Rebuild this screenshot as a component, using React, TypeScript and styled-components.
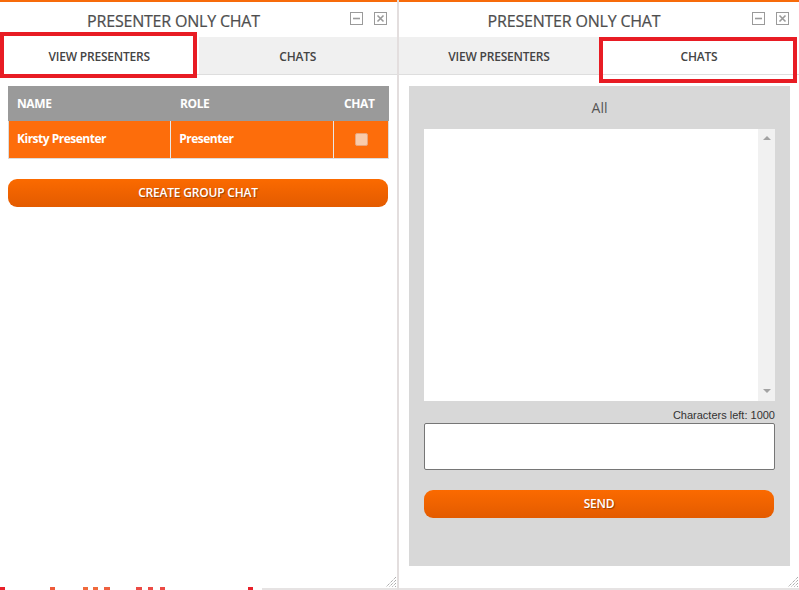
import styled, { createGlobalStyle } from "styled-components"

const GlobalStyle = createGlobalStyle`
  html, body {
    margin: 0;
    padding: 0;
    background: #ffffff;
    overflow: hidden;
  }
  * {
    box-sizing: border-box;
  }
`

const presenters = [{ name: "Kirsty Presenter", role: "Presenter" }]

// bits of a cut-off annotation peeking in at the bottom of the left window
const cutMarks = [
  { x: 0, w: 5, c: "#e8202a" },
  { x: 50, w: 5, c: "#ee5a3a" },
  { x: 83, w: 5, c: "#f06a3c" },
  { x: 93, w: 5, c: "#f06a3c" },
  { x: 104, w: 6, c: "#ef6040" },
  { x: 136, w: 6, c: "#ec4a44" },
  { x: 148, w: 5, c: "#ec4a44" },
  { x: 160, w: 5, c: "#ec4a44" },
  { x: 248, w: 5, c: "#e8202a" },
]

const MinIcon = () => (
  <svg width="13" height="13" viewBox="0 0 13 13">
    <rect x="0.5" y="0.5" width="12" height="12" fill="none" stroke="#9a9a9a" />
    <line x1="3" y1="6.5" x2="10" y2="6.5" stroke="#9a9a9a" strokeWidth="1.6" />
  </svg>
)

const CloseIcon = () => (
  <svg width="13" height="13" viewBox="0 0 13 13">
    <rect x="0.5" y="0.5" width="12" height="12" fill="none" stroke="#9a9a9a" />
    <path d="M3.5 3.5 L9.5 9.5 M9.5 3.5 L3.5 9.5" stroke="#9a9a9a" strokeWidth="1.6" />
  </svg>
)

const Grip = () => (
  <svg width="12" height="12" viewBox="0 0 12 12">
    <path d="M11 1 L1 11 M11 4 L4 11 M11 7 L7 11 M11 10 L10 11" stroke="#8a8a8a" strokeWidth="1" strokeDasharray="1 1" />
  </svg>
)

const Header = () => (
  <TitleBar>
    <Title>PRESENTER ONLY CHAT</Title>
    <Controls>
      <MinIcon />
      <CloseIcon />
    </Controls>
  </TitleBar>
)

const App = () => {
  return (
    <>
      <GlobalStyle />
      <Page>
        <Window $width={397}>
          <Header />
          <Tabs>
            <Tab $active>VIEW PRESENTERS</Tab>
            <Tab>CHATS</Tab>
          </Tabs>
          <Highlight $left={0} $top={32} $width={197} $height={46} />
          <PresenterBody>
            <Table>
              <HeadRow>
                <HeadCell $width={163}>NAME</HeadCell>
                <HeadCell $width={164}>ROLE</HeadCell>
                <HeadCell $width={54}>CHAT</HeadCell>
              </HeadRow>
              {presenters.map((p) => (
                <Row key={p.name}>
                  <Cell $width={163}>{p.name}</Cell>
                  <Cell $width={164}>{p.role}</Cell>
                  <Cell $width={54} $center>
                    <Check />
                  </Cell>
                </Row>
              ))}
            </Table>
            <OrangeButton>CREATE GROUP CHAT</OrangeButton>
          </PresenterBody>
          <GripHold>
            <Grip />
          </GripHold>
          <BottomStrip $from={262} />
          {cutMarks.map((m) => (
            <CutMark key={m.x} style={{ left: m.x, width: m.w, background: m.c }} />
          ))}
        </Window>
        <Divider />
        <Window $width={400}>
          <Header />
          <Tabs>
            <Tab>VIEW PRESENTERS</Tab>
            <Tab $active>CHATS</Tab>
          </Tabs>
          <Highlight $left={200} $top={37} $width={198} $height={46} />
          <ChatBody>
            <ChatBox>
              <RoomName>All</RoomName>
              <Messages>
                <MessageList />
                <ScrollBar>
                  <Arrow $up />
                  <Arrow />
                </ScrollBar>
              </Messages>
              <Counter>Characters left: 1000</Counter>
              <Input />
              <SendButton>SEND</SendButton>
            </ChatBox>
          </ChatBody>
          <GripHold>
            <Grip />
          </GripHold>
          <BottomStrip $from={0} />
        </Window>
      </Page>
    </>
  )
}

export default App

const Page = styled.div`
display: flex;
width: 799px;
height: 590px;
font-family: "Open Sans", "Noto Sans", sans-serif;
`

const Window = styled.div<{ $width: number }>`
position: relative;
width: ${(p) => p.$width}px;
height: 590px;
display: flex;
flex-direction: column;
border-top: 2px solid #f76b0a;
background: #fff;
`

const Divider = styled.div`
width: 2px;
height: 590px;
background: #e3dede;
`

const TitleBar = styled.div`
height: 35px;
display: flex;
align-items: center;
`

const Title = styled.div`
flex: 1;
text-align: center;
font-size: 16px;
color: #4e4e4e;
letter-spacing: -0.2px;
padding-top: 2px;
-webkit-text-stroke: 0.2px #4e4e4e;
`

const Controls = styled.div`
width: 50px;
display: flex;
justify-content: flex-end;
gap: 11px;
padding-right: 10px;
margin-top: -3px;
`

const Tabs = styled.div`
display: flex;
height: 38px;
border-bottom: 1px solid #dedede;
`

const Tab = styled.div<{ $active?: boolean }>`
flex: 1;
display: flex;
align-items: center;
justify-content: center;
padding-top: 2px;
font-size: 12px;
font-weight: 600;
color: #444;
letter-spacing: -0.2px;
background: ${(p) => (p.$active ? "#ffffff" : "#f0f0f0")};
`

const Highlight = styled.div<{ $left: number; $top: number; $width: number; $height: number }>`
position: absolute;
left: ${(p) => p.$left}px;
top: ${(p) => p.$top - 2}px;
width: ${(p) => p.$width}px;
height: ${(p) => p.$height}px;
border: 4px solid #e81c24;
pointer-events: none;
`

const PresenterBody = styled.div`
padding: 11px 8px 0;
display: flex;
flex-direction: column;
gap: 20px;
`

const Table = styled.div`
display: flex;
flex-direction: column;
width: 381px;
`

const HeadRow = styled.div`
display: flex;
height: 35px;
background: #9a9a9a;
`

const HeadCell = styled.div<{ $width: number }>`
width: ${(p) => p.$width}px;
display: flex;
align-items: center;
padding-left: 9px;
font-size: 12px;
font-weight: 700;
color: #fff;
letter-spacing: -0.4px;
`

const Row = styled.div`
display: flex;
height: 38px;
background: #fd6d0b;
border: 1px solid #dcdcdc;
border-top: none;
`

const Cell = styled.div<{ $width: number; $center?: boolean }>`
width: ${(p) => p.$width}px;
display: flex;
align-items: center;
justify-content: ${(p) => (p.$center ? "center" : "flex-start")};
padding-left: ${(p) => (p.$center ? "0" : "8px")};
padding-bottom: 2px;
font-size: 12px;
font-weight: 700;
color: #fff;
letter-spacing: -0.5px;
border-right: 1px solid #e8e8e8;
&:last-child {
  border-right: none;
}
`

const Check = styled.div`
width: 13px;
height: 13px;
border: 1px solid #e9a57c;
border-radius: 2px;
background: #f9cbab;
margin-top: 2px;
`

const OrangeButton = styled.div`
height: 28px;
width: 380px;
border-radius: 9px;
background: linear-gradient(#fb6a00, #e35b00);
display: flex;
align-items: center;
justify-content: center;
padding-bottom: 1px;
font-size: 12px;
font-weight: 600;
color: #fff;
letter-spacing: -0.2px;
text-shadow: 1px 1px 1px rgba(0, 0, 0, 0.35);
`

const ChatBody = styled.div`
padding: 11px 9px 0 10px;
`

const ChatBox = styled.div`
height: 480px;
background: #d8d8d8;
padding: 0 15px;
display: flex;
flex-direction: column;
`

const RoomName = styled.div`
height: 43px;
display: flex;
align-items: center;
justify-content: center;
font-size: 14px;
color: #555;
`

const Messages = styled.div`
height: 272px;
display: flex;
background: #fff;
`

const MessageList = styled.div`
flex: 1;
`

const ScrollBar = styled.div`
width: 17px;
background: #f1f1f1;
display: flex;
flex-direction: column;
justify-content: space-between;
align-items: center;
padding: 7px 0 8px;
`

const Arrow = styled.div<{ $up?: boolean }>`
width: 0;
height: 0;
border-left: 4px solid transparent;
border-right: 4px solid transparent;
${(p) => (p.$up ? "border-bottom: 4px solid #a3a3a3;" : "border-top: 4px solid #a3a3a3;")}
`

const Counter = styled.div`
height: 22px;
display: flex;
align-items: flex-end;
justify-content: flex-end;
padding-bottom: 2px;
font-family: "Liberation Sans", Arial, sans-serif;
font-size: 11px;
color: #333;
`

const Input = styled.div`
height: 47px;
background: #fff;
border: 1px solid #767676;
border-radius: 2px;
`

const SendButton = styled(OrangeButton)`
width: 350px;
margin-top: 20px;
height: 28px;
`

const GripHold = styled.div`
position: absolute;
right: 0;
bottom: 2px;
display: flex;
`

const BottomStrip = styled.div<{ $from: number }>`
position: absolute;
left: ${(p) => p.$from}px;
right: 0;
bottom: 0;
height: 2px;
background: #e6e3e3;
`

const CutMark = styled.div`
position: absolute;
bottom: 0;
height: 3px;
`
